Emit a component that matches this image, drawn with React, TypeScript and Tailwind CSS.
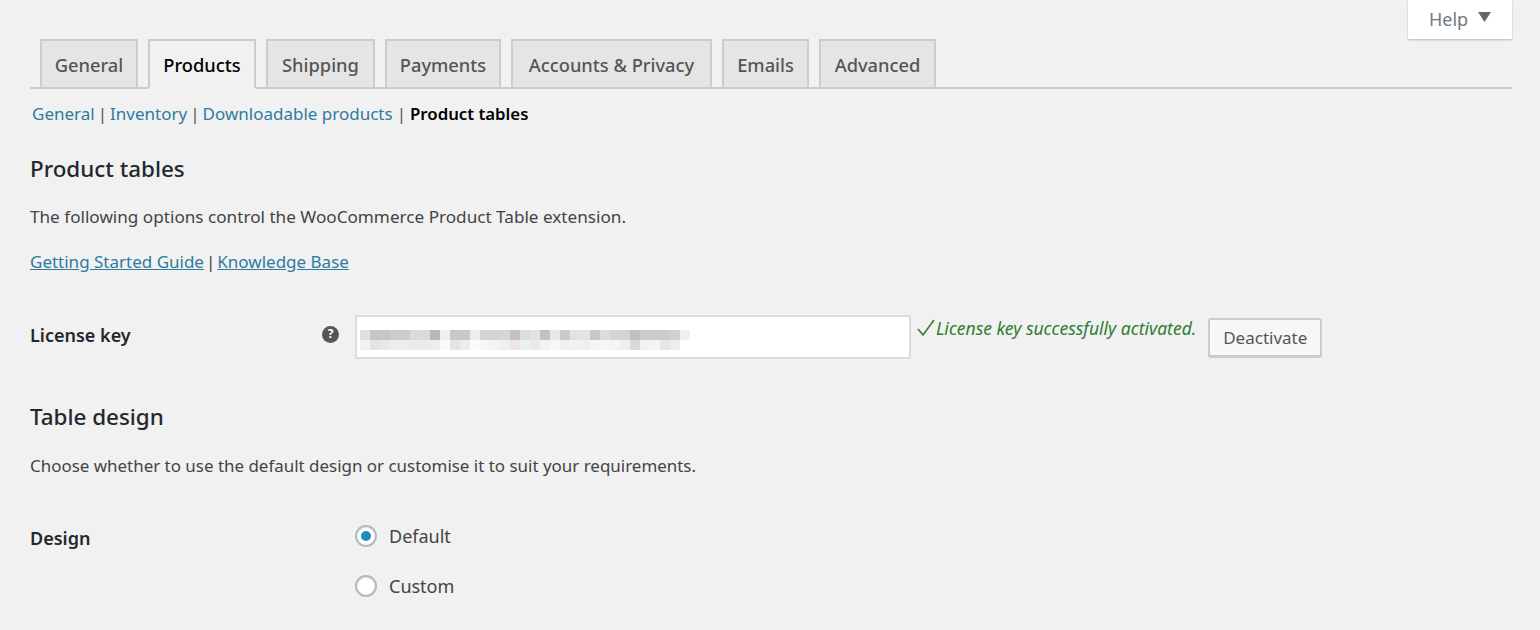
import React from 'react';

const tabs = ['General', 'Products', 'Shipping', 'Payments', 'Accounts & Privacy', 'Emails', 'Advanced'];

const tabWidths: Record<string, string> = {
  General: 'w-[98px]',
  Products: 'w-[108px]',
  Shipping: 'w-[109px]',
  Payments: 'w-[116px]',
  'Accounts & Privacy': 'w-[201px]',
  Emails: 'w-[87px]',
  Advanced: 'w-[117px]',
};

// pixelated licence key, 10px blocks, top and bottom rows
const blurTop = [
  '#e0e0e0', '#c6c6c6', '#c6c6c6', '#cccccc', '#cccccc', '#dadada', '#dadada', '#b6b8b6', '#f0f0f0', '#c8c8c8', '#c8c8c8', '#ececec', '#d4d4d4', '#d4d4d4', '#d6d6d6', '#c8bfbf',
  '#d8dde2', '#dfe3e8', '#c0c2c4', '#e8e8e8', '#cbcbcb', '#e2e2e0', '#e4e3de', '#c8c8c8', '#dcdcdc', '#d4d4d4', '#d4d4d4', '#c0c0c0', '#cccccc', '#cccccc', '#cccccc', '#d0d0d0', '#eef0f3',
];
const blurBottom = [
  '#f2f2f2', '#e4e4e4', '#e8e8e8', '#ececec', '#ececec', '#ebebeb', '#ebebeb', '#ededed', '#fafafa', '#e4e4e4', '#ededed', '#fbfbfb', '#f6f6f6', '#f3f3f3', '#f0f0f0', '#e8e6e6',
  '#eceef0', '#e8eaec', '#f2f2f2', '#f8f8f8', '#f0f0f0', '#f2f2ef', '#f0f0ee', '#f5f5f5', '#f6f6f6', '#f5f5f5', '#eeeeee', '#d9d9d9', '#f2f2f2', '#f4f4f4', '#e6e6e6', '#ececec', '#ffffff',
];

const Radio = ({ checked }: { checked?: boolean }) => (
  <span className="flex h-[22px] w-[22px] items-center justify-center rounded-full border-2 border-[#b4b9be] bg-white shadow-[inset_0_1px_2px_rgba(0,0,0,0.1)]">
    {checked && <span className="h-[10px] w-[10px] rounded-full bg-[#1e8cbe]" />}
  </span>
);

export default function App() {
  return (
    <div className="h-[630px] overflow-hidden bg-[#f1f1f1] pl-[30px] pr-[28px] font-['Noto_Sans',sans-serif] text-[17px] text-[#444]">
      <div className="flex justify-end">
        <div className="flex h-[39px] w-[104px] items-center justify-center gap-[10px] bg-white text-[18px] text-[#72777c] shadow-[0_1px_2px_rgba(0,0,0,0.25)]">
          Help
          <svg width="13" height="10" viewBox="0 0 13 10" className="mb-[5px]">
            <path d="M0 0h13L6.5 10z" fill="#666" />
          </svg>
        </div>
      </div>

      <div className="flex h-[50px] gap-[10px] border-b-2 border-[#cccccc] pl-[10px]">
        {tabs.map((tab) => (
          <div
            key={tab}
            className={`flex items-center justify-center border-2 pt-[2px] text-[18.3px] font-medium ${tabWidths[tab]} ${
              tab === 'Products'
                ? 'h-[50px] border-[#cccccc] border-b-[#f1f1f1] bg-[#f1f1f1] text-black'
                : 'h-[48px] border-[#cccccc] border-b-0 bg-[#e5e5e5] text-[#555]'
            }`}
          >
            {tab}
          </div>
        ))}
      </div>

      <div className="mt-[11px] flex h-[27px] items-center pl-[2px] text-[#2d7ba0]">
        <span>General</span>
        <span className="mx-[3px] text-[#555]">|</span>
        <span>Inventory</span>
        <span className="mx-[3px] text-[#555]">|</span>
        <span>Downloadable products</span>
        <span className="ml-[4px] mr-[4px] text-[#555]">|</span>
        <span className="text-[16.8px] font-semibold text-black">Product tables</span>
      </div>

      <h2 className="mt-[26px] h-[31px] text-[22.4px] font-medium leading-[31px] text-[#23282d]">Product tables</h2>

      <p className="mt-[19px] h-[27px] text-[17.15px] leading-[27px]">The following options control the WooCommerce Product Table extension.</p>

      <p className="mt-[18px] h-[27px] leading-[27px] text-[#2d7ba0]">
        <span className="underline">Getting Started Guide</span>
        <span className="mx-[2px] text-[#444]">|</span>
        <span className="underline">Knowledge Base</span>
      </p>

      <div className="mt-[40px] flex h-[44px] items-center">
        <div className="-mt-[3px] w-[292px] text-[18px] font-semibold text-[#23282d]">License key</div>
        <span className="flex h-[17px] w-[17px] -translate-y-[3px] items-center justify-center rounded-full bg-[#555] text-[12px] font-bold leading-none text-white">?</span>
        <div className="ml-[16px] flex h-[44px] w-[556px] items-center border-2 border-[#dddddd] bg-white pl-[3px]">
          <div className="translate-y-[3px]">
            <div className="flex">
              {blurTop.map((c, i) => (
                <span key={i} className="h-[10px] w-[10px]" style={{ backgroundColor: c }} />
              ))}
            </div>
            <div className="flex">
              {blurBottom.map((c, i) => (
                <span key={i} className="h-[10px] w-[10px]" style={{ backgroundColor: c }} />
              ))}
            </div>
          </div>
        </div>
        <div className="ml-[6px] flex -translate-y-[9px] items-center italic text-[#2e7d32]">
          <svg width="19" height="18" viewBox="0 0 19 18" fill="none" stroke="#2e7d32" strokeWidth="1.6">
            <path d="M1 10l5 6L17 1" />
          </svg>
          <span className="text-[17.5px]">License key successfully activated.</span>
        </div>
        <div className="ml-[12px] flex h-[39px] w-[114px] items-center justify-center rounded-[3px] border-2 border-[#cccccc] bg-[#f7f7f7] pt-[2px] text-[#555] shadow-[0_1px_0_#ccc]">
          Deactivate
        </div>
      </div>

      <h2 className="mt-[42px] h-[31px] text-[22.4px] font-medium leading-[31px] text-[#23282d]">Table design</h2>

      <p className="mt-[20px] h-[27px] text-[16.95px] leading-[27px]">Choose whether to use the default design or customise it to suit your requirements.</p>

      <div className="mt-[46px] flex">
        <div className="w-[325px] text-[18px] font-semibold text-[#23282d]">Design</div>
        <div className="flex flex-col gap-[28px] text-[18px]">
          <label className="flex h-[22px] items-center gap-[12px]">
            <Radio checked />
            Default
          </label>
          <label className="flex h-[22px] items-center gap-[12px]">
            <Radio />
            Custom
          </label>
        </div>
      </div>
    </div>
  );
}
